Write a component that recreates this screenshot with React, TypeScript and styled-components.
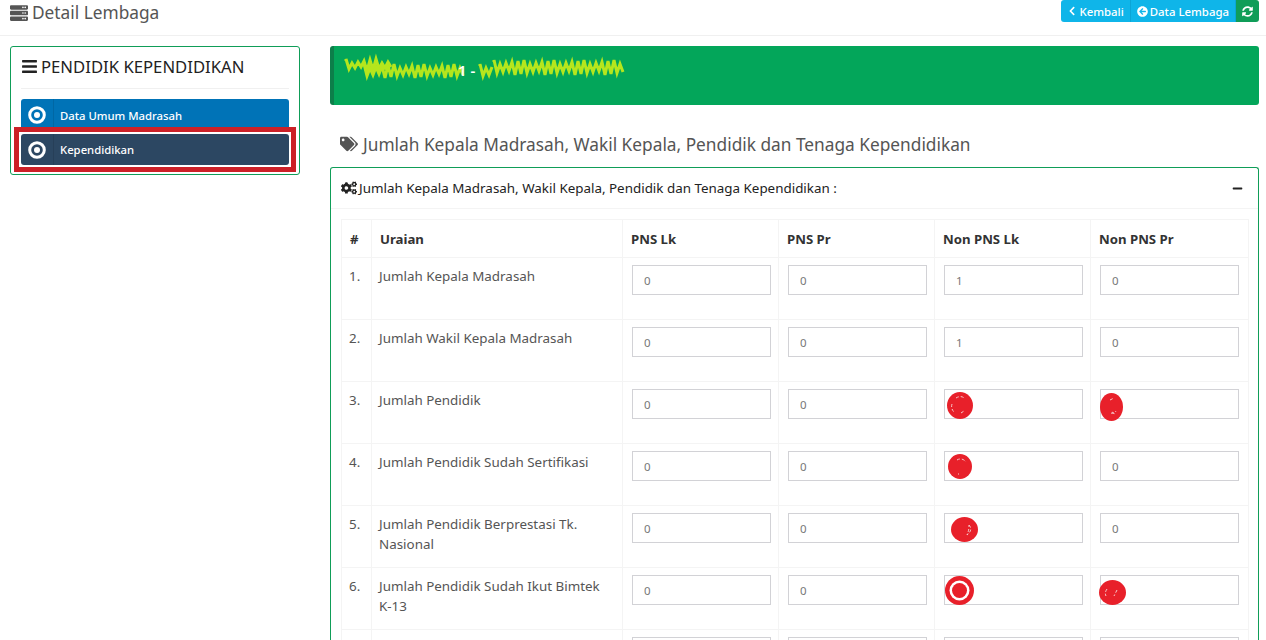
import React from 'react';
import styled, { createGlobalStyle } from 'styled-components';
import { FaChevronLeft, FaCogs, FaBars, FaMinus, FaServer, FaSyncAlt, FaTags, FaArrowCircleLeft } from 'react-icons/fa';

const GlobalStyle = createGlobalStyle`
  html, body {
    margin: 0;
    height: 640px;
    overflow: hidden;
    background: #fff;
    font-family: "Noto Sans", "Open Sans", sans-serif;
    color: #444;
  }
  * { box-sizing: border-box; }
`;

const Header = styled.header`
  height: 36px;
  display: flex;
  justify-content: space-between;
  align-items: flex-start;
  padding: 0 7px 0 10px;
  border-bottom: 1px solid #f0f0f0;
`;

const PageTitle = styled.h1`
  margin: 2px 0 0;
  display: flex;
  align-items: center;
  gap: 4px;
  font-size: 17.3px;
  line-height: 22px;
  font-weight: 400;
  color: #555;
`;

const ButtonGroup = styled.div`
  display: flex;
  height: 22px;
  border-radius: 3px;
  overflow: hidden;
`;

const HeadButton = styled.button<{ $green?: boolean }>`
  display: flex;
  align-items: center;
  gap: 2px;
  border: 0;
  padding: 0 6px;
  font: 500 11.4px "Noto Sans", sans-serif;
  color: #fff;
  background: ${p => (p.$green ? '#0f9d58' : '#0fb5e9')};
  border-right: ${p => (p.$green ? '0' : '1px solid #0ca5d6')};
`;

const Body = styled.div`
  display: flex;
  gap: 30px;
  padding: 10px 7px 0 10px;
`;

const Sidebar = styled.aside`
  position: relative;
  flex: 0 0 290px;
  height: 129px;
  padding: 0 10px;
  background: #fff;
  border: 1px solid #0f9d58;
  border-radius: 3px;
`;

const SideTitle = styled.h3`
  margin: 0 0 10px;
  height: 42px;
  padding-bottom: 2px;
  display: flex;
  align-items: center;
  gap: 3px;
  font-size: 16.7px;
  font-weight: 400;
  color: #222;
  border-bottom: 1px solid #f0f0f0;
`;

const SideItem = styled.div<{ $dark?: boolean }>`
  display: flex;
  align-items: center;
  height: ${p => (p.$dark ? '31px' : '34px')};
  margin-top: ${p => (p.$dark ? '1px' : '0')};
  padding-bottom: ${p => (p.$dark ? '0' : '2px')};
  background: ${p => (p.$dark ? '#2c4762' : '#0073b7')};
  border-radius: 3px;
  color: #fff;
  font-size: 11.3px;
  font-weight: 500;
`;

const SideIcon = styled.span`
  flex: 0 0 33px;
  height: 100%;
  display: flex;
  align-items: center;
  justify-content: center;
  border-right: 1px solid rgba(0, 0, 0, 0.1);
  margin-right: 6px;
`;

const RedFrame = styled.div`
  position: absolute;
  left: 3px;
  top: 80px;
  width: 282px;
  height: 45px;
  border: 5px solid #cc2027;
  outline: 2px solid #fff;
  outline-offset: -7px;
`;

const Main = styled.main`
  flex: 1;
  min-width: 0;
`;

const Banner = styled.div`
  position: relative;
  height: 59px;
  background: #03a65a;
  border-left: 4px solid #0d7f4a;
  border-radius: 3px;
  color: #fff;
  font-size: 15px;
  font-weight: 600;
`;

const BannerText = styled.span`
  position: absolute;
  left: 124px;
  top: 14px;
`;

const Scribble = styled.svg`
  position: absolute;
  left: 10px;
  top: 12px;
  overflow: visible;
`;

const SectionTitle = styled.h2`
  margin: 22px 0 0 10px;
  height: 34px;
  display: flex;
  align-items: center;
  gap: 5px;
  font-size: 17.3px;
  font-weight: 400;
  color: #555;
`;

const Box = styled.section`
  margin-top: 6px;
  background: #fff;
  border: 1px solid #0f9d58;
  border-bottom: 0;
  border-radius: 3px 3px 0 0;
`;

const BoxHead = styled.div`
  height: 41px;
  display: flex;
  justify-content: space-between;
  align-items: center;
  padding: 0 15px 0 10px;
  border-bottom: 1px solid #f4f4f4;
  font-size: 13.4px;
  color: #222;
`;

const BoxTitle = styled.span`
  display: flex;
  align-items: center;
  gap: 2px;
`;

const BoxBody = styled.div`
  padding: 10px;
`;

const Table = styled.table`
  width: 907px;
  border-collapse: collapse;
  table-layout: fixed;
  font-size: 13.4px;
  color: #555;
  th, td {
    border: 1px solid #f4f4f4;
    padding: 8px 7px;
    vertical-align: top;
    text-align: left;
    line-height: 20px;
  }
  th {
    height: 38px;
    padding: 9px 8px 8px;
    color: #333;
    font-weight: 700;
    font-size: 13.2px;
  }
  td {
    height: 62px;
  }
  td:nth-child(n+3) {
    padding: 7px 0 0 9px;
  }
`;

const InputWrap = styled.div`
  position: relative;
  width: 139px;
`;

const ValueInput = styled.input`
  display: block;
  width: 100%;
  height: 30px;
  padding: 0 11px;
  border: 1px solid #d2d2d6;
  background: #fff;
  font: 11.5px "Noto Sans", sans-serif;
  color: #777;
  outline: none;
`;

const Blot = styled.svg<{ $x: number; $y: number }>`
  position: absolute;
  left: ${p => p.$x}px;
  top: ${p => p.$y}px;
`;

// target ring icon of the sidebar, heavier than the icon packages' one
function TargetIcon() {
  return (
    <svg width="18" height="18" viewBox="0 0 18 18">
      <circle cx="9" cy="9" r="7.3" fill="none" stroke="#fff" strokeWidth="3" />
      <circle cx="9" cy="9" r="3" fill="#fff" />
    </svg>
  );
}

// marker scribble over the blurred name: a tight zigzag with some wobble
function zigzag(x0: number, x1: number, top: number, bottom: number) {
  let d = `M${x0} ${top}`;
  let i = 0;
  for (let x = x0; x < x1; x += 3) {
    const wobble = ((i * 7) % 5) - 2;
    d += ` L${x} ${(i % 2 ? bottom : top) + wobble}`;
    i++;
  }
  return d;
}

type Mark = { x: number; y: number; w: number; h: number; ring?: boolean; specks?: string };
type Row = { label: string; values: string[]; marks?: (Mark | null)[] };

const rows: Row[] = [
  { label: 'Jumlah Kepala Madrasah', values: ['0', '0', '1', '0'] },
  { label: 'Jumlah Wakil Kepala Madrasah', values: ['0', '0', '1', '0'] },
  {
    label: 'Jumlah Pendidik',
    values: ['0', '0', '', ''],
    marks: [
      null,
      null,
      { x: 3, y: 3, w: 26, h: 27, specks: 'M9 6 C12 4 16 4 18 7 M5 12 C4 15 5 18 7 20 M14 21 L17 19' },
      { x: 0, y: 4, w: 23, h: 28, specks: 'M10 7 L14 5 M11 20 C13 21 15 20 16 18 M12 19 L15 21' },
    ],
  },
  {
    label: 'Jumlah Pendidik Sudah Sertifikasi',
    values: ['0', '0', '', '0'],
    marks: [null, null, { x: 4, y: 3, w: 24, h: 25, specks: 'M9 6 C12 4 16 5 18 8 M10 20 L11 20' }, null],
  },
  {
    label: 'Jumlah Pendidik Berprestasi Tk. Nasional',
    values: ['0', '0', '', '0'],
    marks: [null, null, { x: 7, y: 4, w: 27, h: 25, specks: 'M18 8 C21 11 20 15 16 18 C18 13 18 11 18 8' }, null],
  },
  {
    label: 'Jumlah Pendidik Sudah Ikut Bimtek K-13',
    values: ['0', '0', '', ''],
    marks: [
      null,
      null,
      { x: 1, y: 1, w: 29, h: 29, ring: true },
      { x: -1, y: 5, w: 27, h: 25, specks: 'M8 9 C6 12 6 14 7 16 M18 10 L15 16' },
    ],
  },
  { label: 'Jumlah Tenaga Kependidikan', values: ['0', '0', '0', '0'] },
];

function RedMark({ mark }: { mark: Mark }) {
  const { x, y, w, h, ring, specks } = mark;
  return (
    <Blot $x={x} $y={y} width={w} height={h} viewBox={`0 0 ${w} ${h}`}>
      <ellipse cx={w / 2} cy={h / 2} rx={w / 2} ry={h / 2} fill="#e8202a" />
      {ring && <circle cx={w / 2} cy={h / 2} r={10} fill="#fff" />}
      {ring && <circle cx={w / 2} cy={h / 2} r={7.5} fill="#e8202a" />}
      {specks && <path d={specks} stroke="#f6c9cb" strokeWidth="1" fill="none" strokeDasharray="3 2" />}
    </Blot>
  );
}

export default function App() {
  return (
    <>
      <GlobalStyle />
      <Header>
        <PageTitle><FaServer size={18} /> Detail Lembaga</PageTitle>
        <ButtonGroup>
          <HeadButton><FaChevronLeft size={10} /> Kembali</HeadButton>
          <HeadButton><FaArrowCircleLeft size={11} /> Data Lembaga</HeadButton>
          <HeadButton $green><FaSyncAlt size={11} /></HeadButton>
        </ButtonGroup>
      </Header>
      <Body>
        <Sidebar>
          <SideTitle><FaBars size={17} /> PENDIDIK KEPENDIDIKAN</SideTitle>
          <SideItem>
            <SideIcon><TargetIcon /></SideIcon>
            Data Umum Madrasah
          </SideItem>
          <SideItem $dark>
            <SideIcon><TargetIcon /></SideIcon>
            Kependidikan
          </SideItem>
          <RedFrame />
        </Sidebar>
        <Main>
          <Banner>
            <Scribble width="282" height="24" viewBox="0 0 282 24">
              <path d={zigzag(2, 50, 3, 11)} stroke="#b5e61d" strokeWidth="3" fill="none" />
              <path d={zigzag(20, 122, 8, 18)} stroke="#b5e61d" strokeWidth="3" fill="none" />
              <path d={zigzag(136, 150, 8, 18)} stroke="#b5e61d" strokeWidth="3" fill="none" />
              <path d={zigzag(150, 282, 4, 15)} stroke="#b5e61d" strokeWidth="3" fill="none" />
            </Scribble>
            <BannerText>1 -</BannerText>
          </Banner>
          <SectionTitle><FaTags size={18} /> Jumlah Kepala Madrasah, Wakil Kepala, Pendidik dan Tenaga Kependidikan</SectionTitle>
          <Box>
            <BoxHead>
              <BoxTitle><FaCogs size={16} /> Jumlah Kepala Madrasah, Wakil Kepala, Pendidik dan Tenaga Kependidikan :</BoxTitle>
              <FaMinus size={11} color="#222" />
            </BoxHead>
            <BoxBody>
              <Table>
                <colgroup>
                  <col style={{ width: 30 }} />
                  <col style={{ width: 251 }} />
                  <col style={{ width: 156 }} />
                  <col style={{ width: 156 }} />
                  <col style={{ width: 156 }} />
                  <col style={{ width: 158 }} />
                </colgroup>
                <thead>
                  <tr>
                    <th>#</th>
                    <th>Uraian</th>
                    <th>PNS Lk</th>
                    <th>PNS Pr</th>
                    <th>Non PNS Lk</th>
                    <th>Non PNS Pr</th>
                  </tr>
                </thead>
                <tbody>
                  {rows.map((row, i) => (
                    <tr key={i}>
                      <td>{i + 1}.</td>
                      <td>{row.label}</td>
                      {row.values.map((v, j) => {
                        const m = row.marks?.[j];
                        return (
                          <td key={j}>
                            <InputWrap>
                              <ValueInput readOnly value={v} />
                              {m && <RedMark mark={m} />}
                            </InputWrap>
                          </td>
                        );
                      })}
                    </tr>
                  ))}
                </tbody>
              </Table>
            </BoxBody>
          </Box>
        </Main>
      </Body>
    </>
  );
}
